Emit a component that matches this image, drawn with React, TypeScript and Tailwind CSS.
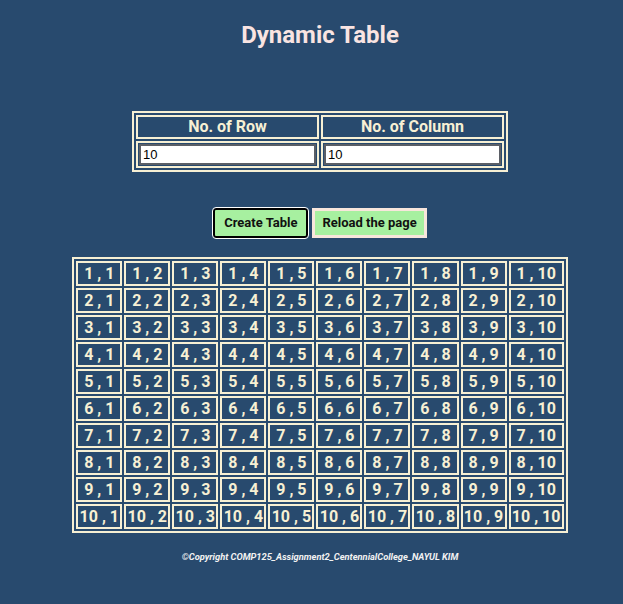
import React from "react";

const rows = Array.from({ length: 10 }, (_, i) => i + 1);
const cols = Array.from({ length: 10 }, (_, i) => i + 1);

export default function App() {
  return (
    <div className="min-h-[604px] bg-[#284a6e] pl-[17px] font-['Roboto',sans-serif]">
      <div className="flex flex-col items-center">
        {/* Heading */}
        <h1 className="mt-[20px] text-[24px] leading-[30px] font-bold text-[#f9e4e2]">
          Dynamic Table
        </h1>

        {/* Row / column input */}
        <table className="mt-[61px] border-separate border-spacing-[2px] border-2 border-[#f7f0d4]">
          <thead>
            <tr>
              <th className="w-[183px] h-[24px] border-2 border-[#f7f0d4] p-0 text-[16px] leading-[20px] font-bold text-[#f7f0d4]">
                No. of Row
              </th>
              <th className="w-[183px] h-[24px] border-2 border-[#f7f0d4] p-0 text-[16px] leading-[20px] font-bold text-[#f7f0d4]">
                No. of Column
              </th>
            </tr>
          </thead>
          <tbody>
            <tr>
              <td className="border-2 border-[#f7f0d4] p-[1px]">
                <input
                  defaultValue="10"
                  className="block w-full h-[21px] bg-white border-2 border-[#5b5f66] px-[2px] text-[13px] text-black font-['Liberation_Sans',sans-serif] outline-none"
                />
              </td>
              <td className="border-2 border-[#f7f0d4] p-[1px]">
                <input
                  defaultValue="10"
                  className="block w-full h-[21px] bg-white border-2 border-[#5b5f66] px-[2px] text-[13px] text-black font-['Liberation_Sans',sans-serif] outline-none"
                />
              </td>
            </tr>
          </tbody>
        </table>

        {/* Buttons */}
        <div className="mt-[36px] flex gap-[4px]">
          <button className="h-[30px] px-[9px] rounded-[3px] bg-[#a7f0a0] border-2 border-black outline outline-1 outline-white text-[13px] font-bold text-[#111]">
            Create Table
          </button>
          <button className="h-[30px] px-[7px] bg-[#a7f0a0] border-[3px] border-[#f8e6dc] text-[13px] font-bold text-[#111]">
            Reload the page
          </button>
        </div>

        {/* Generated table */}
        <table className="mt-[19px] border-separate border-spacing-[2px] border-2 border-[#f7f0d4]">
          <tbody>
            {rows.map((r) => (
              <tr key={r}>
                {cols.map((c) => (
                  <td
                    key={c}
                    className="border-2 border-[#f7f0d4] px-[1.3px] py-[1px] text-center text-[16px] leading-[19px] font-bold text-[#f7f0d4] whitespace-nowrap"
                  >
                    {r} , {c}
                  </td>
                ))}
              </tr>
            ))}
          </tbody>
        </table>

        {/* Footer */}
        <p className="mt-[17px] text-[9.3px] italic font-bold text-[#f2f2f2]">
          ©Copyright COMP125_Assignment2_CentennialCollege_NAYUL KIM
        </p>
      </div>
    </div>
  );
}
